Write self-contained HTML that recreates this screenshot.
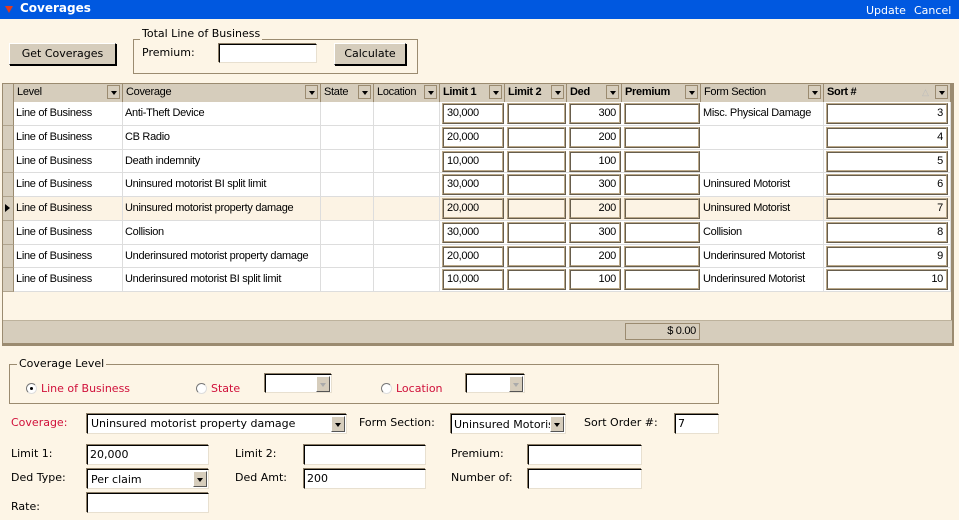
<!DOCTYPE html>
<html><head><meta charset="utf-8"><style>
*{box-sizing:border-box;margin:0;padding:0}
body{width:959px;height:520px;background:#fdf5e6;position:relative;overflow:hidden;font-family:"DejaVu Sans","Liberation Sans",sans-serif;font-size:11px;color:#000}
.a{position:absolute}
.title{left:0;top:0;width:959px;height:19px;background:#0058e0;color:#fff}
.btn{background:#d6cdbc;border:1px solid;border-color:#fff #000 #000 #fff;box-shadow:1px 1px 0 #000;text-align:center;line-height:20px;font-size:11px}
.tb{background:#fff;border:1px solid;border-color:#000 #e8e0d0 #e8e0d0 #000;box-shadow:-1px -1px 0 #8a7c66;padding-left:2px;font-size:11px;line-height:18px}
.grp{border:1px solid #9b8b70}
.grid{left:2px;top:83px;width:952px;height:263px;border:1px solid #9b8b70;border-right:3px solid #9b8b70;border-bottom:3px solid #9b8b70;background:#fdf5e6}
.g{font-family:"Liberation Sans",sans-serif;font-size:11px;letter-spacing:-.3px}
.hd{top:84px;height:18px;background:#d6cdbc;border-right:1px solid #9b8b70;line-height:17px;padding-left:3px}
.hd b{font-weight:bold}
.dd{position:absolute;right:2px;top:1px;width:13px;height:14px;border:1px solid #9b8b70;background:#d6cdbc}
.dd:after{content:"";position:absolute;left:3px;top:5px;border:3px solid transparent;border-top:4px solid #000;border-bottom:0}
.rw{left:0;width:959px}
.rh{left:3px;width:11px;height:100%;background:#d6cdbc;border-right:1px solid #9b8b70;border-bottom:1px solid #b0a48e}
.c{height:100%;border-right:1px solid #ddd;border-bottom:1px solid #ddd;background:#fff;line-height:23px;padding-left:2px;white-space:nowrap;overflow:hidden}
.in{height:21px;border:2px solid #bba98a;border-style:ridge;background:#fff;line-height:17px;padding:0 3px;text-align:right}
.l{text-align:left}
.sel{background:#fcf3e4}
.rd{color:#d0103a}
.radio{width:11px;height:11px;border-radius:50%;background:#fff;border:1px solid #777;border-right-color:#ddd;border-bottom-color:#ddd}
.cb{background:#fff;border:1px solid;border-color:#000 #e8e0d0 #e8e0d0 #000;box-shadow:-1px -1px 0 #8a7c66;height:20px}
.cb .ar{position:absolute;right:1px;top:1px;width:14px;height:16px;background:#d6cdbc;border:1px solid;border-color:#fff #555 #555 #fff}
.cb .ar:after{content:"";position:absolute;left:3px;top:6px;border:3px solid transparent;border-top:4px solid #000;border-bottom:0}
.cb.dis .ar:after{border-top-color:#aaa}
</style></head><body>
<div class="a title"><span class="a" style="left:5px;top:6px;border:4px solid transparent;border-top:7px solid #e03a20;border-bottom:0"></span><span class="a" style="left:20px;top:1px;font-weight:bold;font-size:12px">Coverages</span><span class="a" style="left:866px;top:4px;font-size:11px">Update</span><span class="a" style="left:914px;top:4px;font-size:11px">Cancel</span></div>

<div class="a btn" style="left:9px;top:43px;width:107px;height:22px">Get Coverages</div>
<div class="a grp" style="left:133px;top:39px;width:285px;height:35px"></div>
<div class="a" style="left:140px;top:27px;background:#fdf5e6;padding:0 2px">Total Line of Business</div>
<div class="a" style="left:142px;top:46px">Premium:</div>
<div class="a tb" style="left:219px;top:44px;width:98px;height:19px"></div>
<div class="a btn" style="left:334px;top:43px;width:72px;height:22px">Calculate</div>

<div class="a grid"></div>
<div class="a g" style="left:0;top:0">
<div class="a hd" style="left:3px;width:11px;padding:0"></div>
<div class="a hd" style="left:14px;width:109px">Level<span class="dd"></span></div>
<div class="a hd" style="left:123px;width:198px">Coverage<span class="dd"></span></div>
<div class="a hd" style="left:321px;width:53px">State<span class="dd"></span></div>
<div class="a hd" style="left:374px;width:66px">Location<span class="dd"></span></div>
<div class="a hd" style="left:440px;width:65px"><b>Limit 1</b><span class="dd"></span></div>
<div class="a hd" style="left:505px;width:62px"><b>Limit 2</b><span class="dd"></span></div>
<div class="a hd" style="left:567px;width:55px"><b>Ded</b><span class="dd"></span></div>
<div class="a hd" style="left:622px;width:79px"><b>Premium</b><span class="dd"></span></div>
<div class="a hd" style="left:701px;width:123px">Form Section<span class="dd"></span></div>
<div class="a hd" style="left:824px;width:127px"><b>Sort #</b><span class="a" style="left:98px;top:0;color:#bbb;font-size:9px">&#9651;</span><span class="dd"></span></div>
</div>

<div class="a g" style="left:0;top:102px">
<div class="a rw" style="top:0;height:24px"><div class="a rh"></div><div class="a c" style="left:14px;width:109px">Line of Business</div><div class="a c" style="left:123px;width:198px">Anti-Theft Device</div><div class="a c" style="left:321px;width:53px"></div><div class="a c" style="left:374px;width:66px"></div><div class="a c" style="left:440px;width:511px"></div><div class="a in l" style="left:442px;top:1px;width:62px">30,000</div><div class="a in" style="left:507px;top:1px;width:59px"></div><div class="a in" style="left:569px;top:1px;width:52px">300</div><div class="a in" style="left:624px;top:1px;width:76px"></div><div class="a c" style="left:701px;width:123px">Misc. Physical Damage</div><div class="a in" style="left:826px;top:1px;width:122px">3</div></div>

<div class="a rw" style="top:24px;height:24px"><div class="a rh"></div><div class="a c" style="left:14px;width:109px">Line of Business</div><div class="a c" style="left:123px;width:198px">CB Radio</div><div class="a c" style="left:321px;width:53px"></div><div class="a c" style="left:374px;width:66px"></div><div class="a c" style="left:440px;width:511px"></div><div class="a in l" style="left:442px;top:1px;width:62px">20,000</div><div class="a in" style="left:507px;top:1px;width:59px"></div><div class="a in" style="left:569px;top:1px;width:52px">200</div><div class="a in" style="left:624px;top:1px;width:76px"></div><div class="a c" style="left:701px;width:123px"></div><div class="a in" style="left:826px;top:1px;width:122px">4</div></div>

<div class="a rw" style="top:48px;height:23px"><div class="a rh"></div><div class="a c" style="left:14px;width:109px">Line of Business</div><div class="a c" style="left:123px;width:198px">Death indemnity</div><div class="a c" style="left:321px;width:53px"></div><div class="a c" style="left:374px;width:66px"></div><div class="a c" style="left:440px;width:511px"></div><div class="a in l" style="left:442px;top:1px;width:62px">10,000</div><div class="a in" style="left:507px;top:1px;width:59px"></div><div class="a in" style="left:569px;top:1px;width:52px">100</div><div class="a in" style="left:624px;top:1px;width:76px"></div><div class="a c" style="left:701px;width:123px"></div><div class="a in" style="left:826px;top:1px;width:122px">5</div></div>

<div class="a rw" style="top:71px;height:24px"><div class="a rh"></div><div class="a c" style="left:14px;width:109px">Line of Business</div><div class="a c" style="left:123px;width:198px">Uninsured motorist BI split limit</div><div class="a c" style="left:321px;width:53px"></div><div class="a c" style="left:374px;width:66px"></div><div class="a c" style="left:440px;width:511px"></div><div class="a in l" style="left:442px;top:1px;width:62px">30,000</div><div class="a in" style="left:507px;top:1px;width:59px"></div><div class="a in" style="left:569px;top:1px;width:52px">300</div><div class="a in" style="left:624px;top:1px;width:76px"></div><div class="a c" style="left:701px;width:123px">Uninsured Motorist</div><div class="a in" style="left:826px;top:1px;width:122px">6</div></div>

<div class="a rw" style="top:95px;height:24px"><div class="a rh"><span class="a" style="left:2px;top:7px;border:4px solid transparent;border-left:5px solid #000;border-right:0"></span></div><div class="a c sel" style="left:14px;width:109px">Line of Business</div><div class="a c sel" style="left:123px;width:198px">Uninsured motorist property damage</div><div class="a c sel" style="left:321px;width:53px"></div><div class="a c sel" style="left:374px;width:66px"></div><div class="a c sel" style="left:440px;width:511px"></div><div class="a in l sel" style="left:442px;top:1px;width:62px">20,000</div><div class="a in sel" style="left:507px;top:1px;width:59px"></div><div class="a in sel" style="left:569px;top:1px;width:52px">200</div><div class="a in sel" style="left:624px;top:1px;width:76px"></div><div class="a c sel" style="left:701px;width:123px">Uninsured Motorist</div><div class="a in sel" style="left:826px;top:1px;width:122px">7</div></div>

<div class="a rw" style="top:119px;height:24px"><div class="a rh"></div><div class="a c" style="left:14px;width:109px">Line of Business</div><div class="a c" style="left:123px;width:198px">Collision</div><div class="a c" style="left:321px;width:53px"></div><div class="a c" style="left:374px;width:66px"></div><div class="a c" style="left:440px;width:511px"></div><div class="a in l" style="left:442px;top:1px;width:62px">30,000</div><div class="a in" style="left:507px;top:1px;width:59px"></div><div class="a in" style="left:569px;top:1px;width:52px">300</div><div class="a in" style="left:624px;top:1px;width:76px"></div><div class="a c" style="left:701px;width:123px">Collision</div><div class="a in" style="left:826px;top:1px;width:122px">8</div></div>

<div class="a rw" style="top:143px;height:23px"><div class="a rh"></div><div class="a c" style="left:14px;width:109px">Line of Business</div><div class="a c" style="left:123px;width:198px">Underinsured motorist property damage</div><div class="a c" style="left:321px;width:53px"></div><div class="a c" style="left:374px;width:66px"></div><div class="a c" style="left:440px;width:511px"></div><div class="a in l" style="left:442px;top:1px;width:62px">20,000</div><div class="a in" style="left:507px;top:1px;width:59px"></div><div class="a in" style="left:569px;top:1px;width:52px">200</div><div class="a in" style="left:624px;top:1px;width:76px"></div><div class="a c" style="left:701px;width:123px">Underinsured Motorist</div><div class="a in" style="left:826px;top:1px;width:122px">9</div></div>

<div class="a rw" style="top:166px;height:24px"><div class="a rh"></div><div class="a c" style="left:14px;width:109px">Line of Business</div><div class="a c" style="left:123px;width:198px">Underinsured motorist BI split limit</div><div class="a c" style="left:321px;width:53px"></div><div class="a c" style="left:374px;width:66px"></div><div class="a c" style="left:440px;width:511px"></div><div class="a in l" style="left:442px;top:1px;width:62px">10,000</div><div class="a in" style="left:507px;top:1px;width:59px"></div><div class="a in" style="left:569px;top:1px;width:52px">100</div><div class="a in" style="left:624px;top:1px;width:76px"></div><div class="a c" style="left:701px;width:123px">Underinsured Motorist</div><div class="a in" style="left:826px;top:1px;width:122px">10</div></div>
</div>

<div class="a" style="left:3px;top:320px;width:949px;height:23px;background:#d6cdbc;border-top:1px solid #bdb29c"></div>
<div class="a g" style="left:625px;top:323px;width:75px;height:17px;border:1px solid #9b8b70;text-align:right;padding-right:3px;line-height:15px">$ 0.00</div>

<div class="a grp" style="left:9px;top:364px;width:710px;height:40px"></div>
<div class="a" style="left:17px;top:357px;background:#fdf5e6;padding:0 2px">Coverage Level</div>
<div class="a radio" style="left:26px;top:383px"><span class="a" style="left:3px;top:3px;width:3px;height:3px;background:#000;border-radius:50%"></span></div>
<div class="a rd" style="left:41px;top:382px">Line of Business</div>
<div class="a radio" style="left:196px;top:383px"></div>
<div class="a rd" style="left:211px;top:382px">State</div>
<div class="a cb dis" style="left:265px;top:374px;width:67px;height:19px"><span class="ar"></span></div>
<div class="a radio" style="left:381px;top:383px"></div>
<div class="a rd" style="left:396px;top:382px">Location</div>
<div class="a cb dis" style="left:466px;top:374px;width:59px;height:19px"><span class="ar"></span></div>

<div class="a rd" style="left:11px;top:416px">Coverage:</div>
<div class="a cb" style="left:87px;top:414px;width:260px"><span class="a" style="left:3px;top:2px">Uninsured motorist property damage</span><span class="ar"></span></div>
<div class="a" style="left:359px;top:416px">Form Section:</div>
<div class="a cb" style="left:451px;top:414px;width:115px;overflow:hidden"><span class="a" style="left:2px;top:3px;white-space:nowrap">Uninsured Motoris</span><span class="ar"></span></div>
<div class="a" style="left:584px;top:416px">Sort Order #:</div>
<div class="a tb" style="left:675px;top:414px;width:44px;height:20px">7</div>

<div class="a" style="left:11px;top:447px">Limit 1:</div>
<div class="a tb" style="left:87px;top:445px;width:122px;height:20px">20,000</div>
<div class="a" style="left:235px;top:447px">Limit 2:</div>
<div class="a tb" style="left:304px;top:445px;width:122px;height:20px"></div>
<div class="a" style="left:451px;top:447px">Premium:</div>
<div class="a tb" style="left:528px;top:445px;width:114px;height:20px"></div>

<div class="a" style="left:11px;top:471px">Ded Type:</div>
<div class="a cb" style="left:87px;top:469px;width:122px"><span class="a" style="left:3px;top:3px">Per claim</span><span class="ar"></span></div>
<div class="a" style="left:235px;top:471px">Ded Amt:</div>
<div class="a tb" style="left:304px;top:469px;width:122px;height:20px">200</div>
<div class="a" style="left:451px;top:471px">Number of:</div>
<div class="a tb" style="left:528px;top:469px;width:114px;height:20px"></div>

<div class="a" style="left:11px;top:500px">Rate:</div>
<div class="a tb" style="left:87px;top:493px;width:122px;height:20px"></div>
</body></html>
